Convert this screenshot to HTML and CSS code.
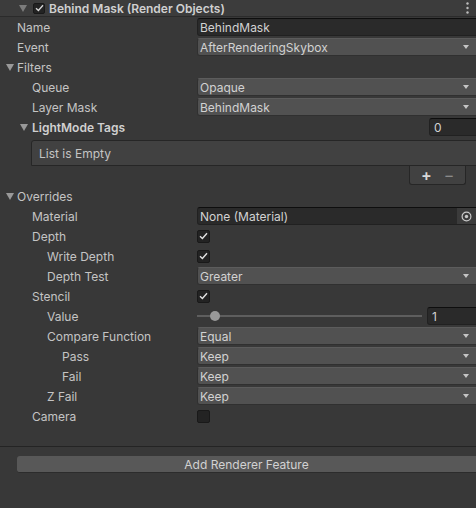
FILE: index.html
```html
<!DOCTYPE html>
<html>
<head>
<meta charset="utf-8">
<link rel="stylesheet" href="styles.css">
</head>
<body>
<div class="inspector">
  <div class="header">
    <svg class="hdr-tri" width="8" height="7" viewBox="0 0 8 7"><path d="M0 0H8L4 7Z"/></svg>
    <span class="check small"><svg width="9" height="8" viewBox="0 0 9 8"><path d="M1 4.2L3.4 6.5L8 1.2" fill="none" stroke="#d8d8d8" stroke-width="1.3"/></svg></span>
    <span class="title">Behind Mask (Render Objects)</span>
    <svg class="kebab" width="3" height="12" viewBox="0 0 3 12"><circle cx="1.5" cy="1.5" r="1.2"/><circle cx="1.5" cy="6" r="1.2"/><circle cx="1.5" cy="10.5" r="1.2"/></svg>
  </div>

  <div class="row"><span class="label">Name</span><div class="field text">BehindMask</div></div>
  <div class="row"><span class="label">Event</span><div class="field drop"><span>AfterRenderingSkybox</span><i class="dd"></i></div></div>
  <div class="row"><span class="label fold"><svg class="tri" width="8" height="7" viewBox="0 0 8 7"><path d="M0 0H8L4 7Z"/></svg>Filters</span></div>
  <div class="row"><span class="label in1">Queue</span><div class="field drop"><span>Opaque</span><i class="dd"></i></div></div>
  <div class="row"><span class="label in1">Layer Mask</span><div class="field drop"><span>BehindMask</span><i class="dd"></i></div></div>
  <div class="row"><span class="label in1 bold fold"><svg class="tri" width="8" height="7" viewBox="0 0 8 7"><path d="M0 0H8L4 7Z"/></svg>LightMode Tags</span><div class="spacer"></div><div class="field text int">0</div></div>
  <div class="list">List is Empty</div>
  <div class="list-footer"><span class="plus">+</span><span class="minus">−</span></div>

  <div class="row"><span class="label fold"><svg class="tri" width="8" height="7" viewBox="0 0 8 7"><path d="M0 0H8L4 7Z"/></svg>Overrides</span></div>
  <div class="row"><span class="label in1">Material</span><div class="field text obj"><span class="objtext">None (Material)</span><span class="picker"><svg width="11" height="11" viewBox="0 0 11 11"><circle cx="5.5" cy="5.5" r="4.4" fill="none" stroke="#c8c8c8" stroke-width="1.2"/><circle cx="5.5" cy="5.5" r="1.7" fill="#c8c8c8"/></svg></span></div></div>
  <div class="row"><span class="label in1">Depth</span><span class="check"><svg width="9" height="8" viewBox="0 0 9 8"><path d="M1 4.2L3.4 6.5L8 1.2" fill="none" stroke="#e2e2e2" stroke-width="1.4"/></svg></span></div>
  <div class="row"><span class="label in2">Write Depth</span><span class="check"><svg width="9" height="8" viewBox="0 0 9 8"><path d="M1 4.2L3.4 6.5L8 1.2" fill="none" stroke="#e2e2e2" stroke-width="1.4"/></svg></span></div>
  <div class="row"><span class="label in2">Depth Test</span><div class="field drop"><span>Greater</span><i class="dd"></i></div></div>
  <div class="row"><span class="label in1">Stencil</span><span class="check"><svg width="9" height="8" viewBox="0 0 9 8"><path d="M1 4.2L3.4 6.5L8 1.2" fill="none" stroke="#e2e2e2" stroke-width="1.4"/></svg></span></div>
  <div class="row"><span class="label in2">Value</span><div class="slider"><div class="track"><span class="thumb"></span></div></div><div class="field text int slider-int">1</div></div>
  <div class="row"><span class="label in2">Compare Function</span><div class="field drop"><span>Equal</span><i class="dd"></i></div></div>
  <div class="row"><span class="label in3">Pass</span><div class="field drop"><span>Keep</span><i class="dd"></i></div></div>
  <div class="row"><span class="label in3">Fail</span><div class="field drop"><span>Keep</span><i class="dd"></i></div></div>
  <div class="row"><span class="label in2">Z Fail</span><div class="field drop"><span>Keep</span><i class="dd"></i></div></div>
  <div class="row"><span class="label in1">Camera</span><span class="check"></span></div>

  <div class="separator"></div>
  <div class="button">Add Renderer Feature</div>
</div>
</body>
</html>
```

FILE: styles.css
```css
html, body {
  margin: 0;
  padding: 0;
  background: #383838;
}
.inspector {
  width: 476px;
  height: 508px;
  overflow: hidden;
  background: #383838;
  font-family: Inter, "Noto Sans", sans-serif;
  font-size: 12px;
  color: #c4c4c4;
}
.header {
  height: 16px;
  display: flex;
  align-items: center;
  background: #3c3c3c;
  border-bottom: 1px solid #2b2b2b;
  padding-left: 19px;
  padding-right: 7px;
}
.hdr-tri { fill: #7c7c7c; margin-right: 6px; flex: none; }
.check.small {
  width: 12px;
  height: 11px;
  margin-right: 4px;
}
.title {
  font-weight: 600;
  color: #d0d0d0;
  flex: 1;
}
.kebab { fill: #bdbdbd; }
.row {
  height: 20px;
  display: flex;
  align-items: center;
  padding-left: 17px;
}
.label {
  flex: 0 0 180px;
  box-sizing: border-box;
  white-space: nowrap;
  display: flex;
  align-items: center;
}
.label.in1 { padding-left: 15px; }
.label.in2 { padding-left: 30px; }
.label.in3 { padding-left: 45px; }
.label.bold { font-weight: 600; color: #d0d0d0; }
.tri { fill: #999999; margin-left: -11px; margin-right: 3px; flex: none; }
.label.in1 .tri { margin-left: -12px; margin-right: 4px; }
.spacer { flex: 1; }
.field {
  box-sizing: border-box;
  height: 18px;
  flex: 1;
  margin-right: -4px;
  display: flex;
  align-items: center;
  padding-left: 2px;
  border-radius: 3px;
  color: #d2d2d2;
  white-space: nowrap;
}
.field.text {
  background: #2a2a2a;
  border: 1px solid #212121;
  border-top-color: #0e0e0e;
}
.field.drop {
  background: #515151;
  border: 1px solid #303030;
  border-top-color: #5c5c5c;
  justify-content: space-between;
  padding-right: 10px;
}
.dd {
  width: 0;
  height: 0;
  border-left: 3.5px solid transparent;
  border-right: 3.5px solid transparent;
  border-top: 4px solid #c4c4c4;
}
.field.int {
  flex: 0 0 51px;
  padding-left: 4px;
}
.field.obj {
  padding-right: 0;
  overflow: hidden;
}
.objtext { flex: 1; }
.picker {
  width: 22px;
  align-self: stretch;
  background: #3b3b3b;
  display: flex;
  align-items: center;
  padding-left: 4px;
  box-sizing: border-box;
}
.check {
  box-sizing: border-box;
  width: 13px;
  height: 13px;
  background: #232323;
  border: 1px solid #191919;
  border-radius: 2px;
  display: flex;
  align-items: center;
  justify-content: center;
}
.list {
  box-sizing: border-box;
  height: 26px;
  margin: 3px -4px 0 31px;
  background: #414141;
  border: 1px solid #262626;
  border-radius: 3px 3px 0 0;
  display: flex;
  align-items: center;
  padding-left: 7px;
}
.list-footer {
  box-sizing: border-box;
  width: 57px;
  height: 19px;
  margin: 0 0 1px 409px;
  background: #414141;
  border: 1px solid #262626;
  border-top: none;
  border-radius: 0 0 3px 3px;
  display: flex;
  align-items: center;
  font-size: 16px;
  line-height: 1;
}
.plus { color: #d8d8d8; margin-left: 11px; font-weight: 600; }
.minus { color: #8a8a8a; margin-left: 12px; }
.slider {
  flex: 0 0 225px;
  display: flex;
  align-items: center;
  margin-right: 5px;
}
.track {
  flex: 1;
  height: 2px;
  background: #5e5e5e;
  display: flex;
  align-items: center;
}
.thumb {
  width: 10px;
  height: 10px;
  border-radius: 50%;
  background: #999999;
  margin-left: 13px;
}
.field.slider-int { flex: 0 0 53px; }
.separator {
  height: 1px;
  background: #242424;
  margin-top: 20px;
}
.button {
  height: 16px;
  margin: 9px -4px 0 17px;
  background: #585858;
  border-radius: 3px;
  border-bottom: 1px solid #2c2c2c;
  display: flex;
  align-items: center;
  justify-content: center;
  color: #d2d2d2;
  padding-right: 4px;
}
```
